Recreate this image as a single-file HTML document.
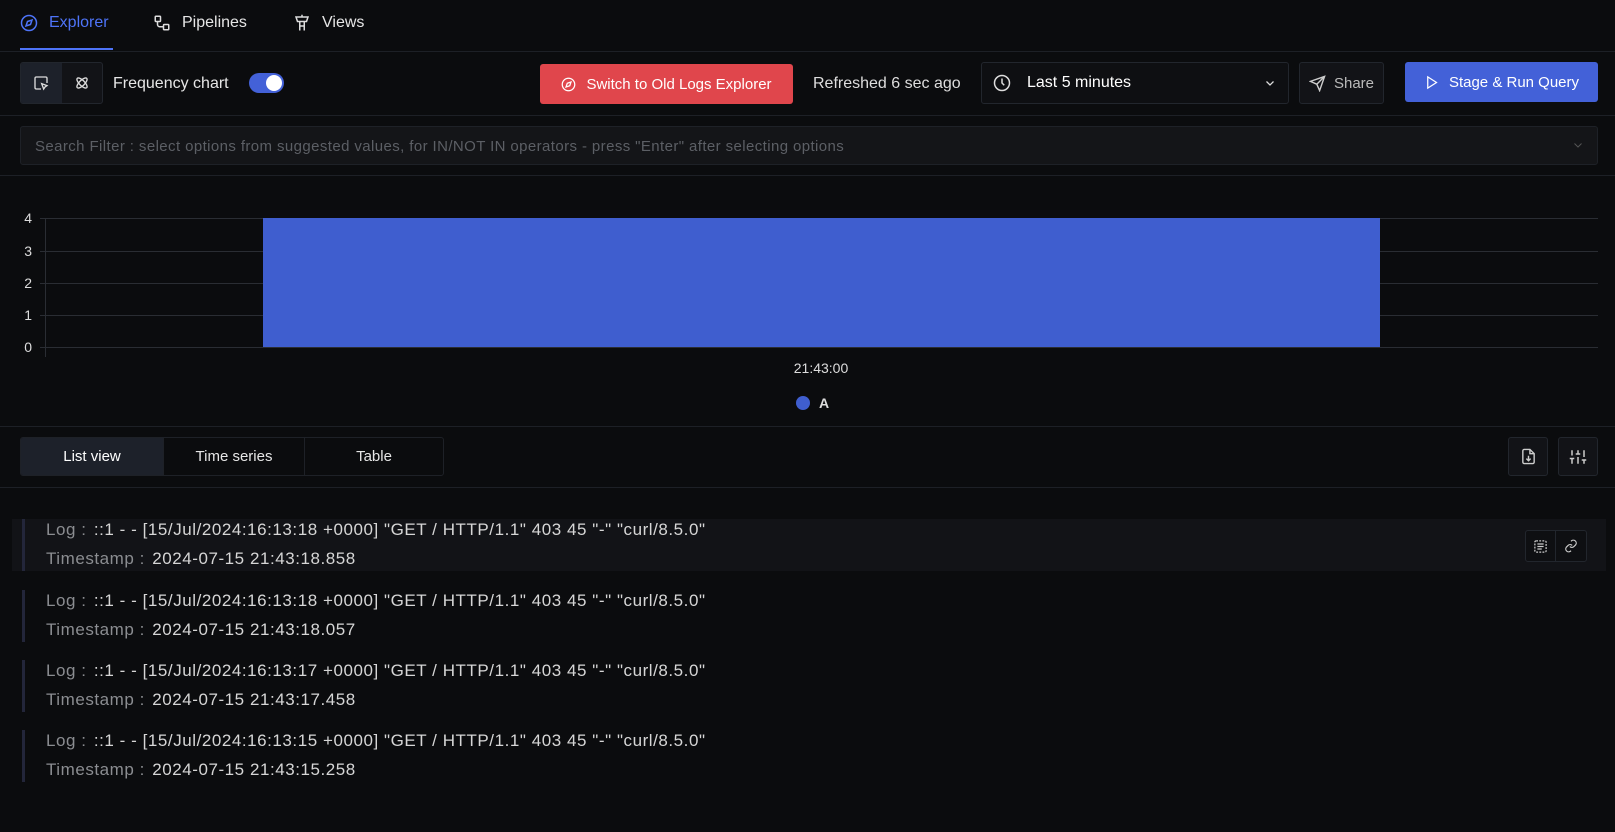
<!DOCTYPE html>
<html><head><meta charset="utf-8"><style>
*{box-sizing:border-box;margin:0;padding:0}
body{width:1615px;height:832px;background:#0b0c0e;color:#e6e6e6;font-family:"Liberation Sans",sans-serif;position:relative;overflow:hidden;font-size:15px}
.a{position:absolute}
.hl{position:absolute;left:0;width:1615px;height:1px;background:#1d2026}
.btn{position:absolute;border:1px solid #22262d;border-radius:3px;background:#121317;display:flex;align-items:center;justify-content:center}
svg{display:block}
.log{position:absolute;left:0;width:1606px;height:52px}
.log .bar{position:absolute;left:22px;top:0;width:3px;height:100%;background:#23263a}
.log .l1,.log .l2{position:absolute;left:46px;font-size:17px;color:#d6d6d6;white-space:nowrap;letter-spacing:0.55px}
.log .l1{top:1px}.log .l2{top:30px}
.log span.k{color:#8b8d91;margin-right:2px}
</style></head><body>
<div class="a" style="left:20px;top:14px;display:flex;align-items:center;color:#4e74f8;font-size:16px">
<svg width="18" height="18" viewBox="0 0 24 24" fill="none" stroke="#4e74f8" stroke-width="2"><circle cx="12" cy="12" r="10"/><path d="M16 8l-2 6-6 2 2-6z"/></svg><span style="margin-left:11px">Explorer</span></div>
<div class="a" style="left:20px;top:48px;width:93px;height:2px;background:#4e74f8"></div>
<div class="a" style="left:153px;top:14px;display:flex;align-items:center;font-size:16px">
<svg width="18" height="18" viewBox="0 0 24 24" fill="none" stroke="#ddd" stroke-width="2"><rect x="3" y="3" width="7" height="7" rx="1"/><rect x="14" y="14" width="7" height="7" rx="1"/><path d="M6 10v4a3 3 0 003 3h5"/></svg><span style="margin-left:11px">Pipelines</span></div>
<div class="a" style="left:293px;top:14px;display:flex;align-items:center;font-size:16px">
<svg width="18" height="18" viewBox="0 0 24 24" fill="none" stroke="#ddd" stroke-width="2"><path d="M4 4h16l-2 6H6z M12 1v3 M9 10v12 M15 10v12 M9 16h6"/></svg><span style="margin-left:11px">Views</span></div>
<div class="hl" style="top:51px"></div>
<div class="btn" style="left:20px;top:62px;width:83px;height:42px;padding:0;justify-content:flex-start;overflow:hidden">
<div style="width:42px;height:42px;background:#1d212a;display:flex;align-items:center;justify-content:center"><svg width="16" height="16" viewBox="0 0 24 24" fill="none" stroke="#ddd" stroke-width="2"><path d="M12 21H5a2 2 0 01-2-2V5a2 2 0 012-2h14a2 2 0 012 2v7"/><path d="M13 13l8 3-3 2-2 3z"/></svg></div>
<div style="width:41px;height:42px;display:flex;align-items:center;justify-content:center"><svg width="16" height="16" viewBox="0 0 24 24" fill="none" stroke="#ddd" stroke-width="2"><ellipse cx="12" cy="12" rx="10" ry="4" transform="rotate(45 12 12)"/><ellipse cx="12" cy="12" rx="10" ry="4" transform="rotate(-45 12 12)"/></svg></div></div>
<div class="a" style="left:113px;top:75px;font-size:16px">Frequency chart</div>
<div class="a" style="left:249px;top:73px;width:35px;height:20px;border-radius:10px;background:#4361d8"><div style="position:absolute;right:2px;top:2px;width:16px;height:16px;border-radius:50%;background:#fff"></div></div>
<div class="a" style="left:540px;top:64px;width:253px;height:40px;background:#e0464c;border-radius:3px;display:flex;align-items:center;justify-content:center;font-size:15px;color:#fff">
<svg width="15" height="15" viewBox="0 0 24 24" fill="none" stroke="#fff" stroke-width="2"><circle cx="12" cy="12" r="10"/><path d="M16 8l-2 6-6 2 2-6z"/></svg><span style="margin-left:10px">Switch to Old Logs Explorer</span></div>
<div class="a" style="left:813px;top:75px;font-size:16px;color:#ddd">Refreshed 6 sec ago</div>
<div class="btn" style="left:981px;top:62px;width:308px;height:42px;justify-content:flex-start;padding-left:11px;background:#0e0f12">
<svg width="18" height="18" viewBox="0 0 24 24" fill="none" stroke="#ddd" stroke-width="2"><circle cx="12" cy="12" r="10"/><path d="M12 6v6l3 3"/></svg><span style="margin-left:16px;font-size:16px;color:#fff">Last 5 minutes</span>
<svg style="position:absolute;right:12px" width="12" height="12" viewBox="0 0 24 24" fill="none" stroke="#ddd" stroke-width="2.5"><path d="M5 9l7 7 7-7"/></svg></div>
<div class="btn" style="left:1299px;top:62px;width:85px;height:42px;color:#bbb;font-size:15px">
<svg width="17" height="17" viewBox="0 0 24 24" fill="none" stroke="#ccc" stroke-width="2"><path d="M22 2L11 13 M22 2l-7 20-4-9-9-4z"/></svg><span style="margin-left:8px">Share</span></div>
<div class="a" style="left:1405px;top:62px;width:193px;height:40px;background:#4361d8;border-radius:3px;display:flex;align-items:center;justify-content:center;font-size:15px;color:#fff">
<svg width="15" height="15" viewBox="0 0 24 24" fill="none" stroke="#fff" stroke-width="2"><path d="M6 3l14 9-14 9z"/></svg><span style="margin-left:10px">Stage &amp; Run Query</span></div>
<div class="hl" style="top:115px"></div>
<div class="a" style="left:20px;top:126px;width:1578px;height:39px;background:#141518;border:1px solid #1e2127;border-radius:3px"></div>
<div class="a" style="left:35px;top:138px;font-size:15px;color:#5c5f65;letter-spacing:0.4px">Search Filter : select options from suggested values, for IN/NOT IN operators - press "Enter" after selecting options</div>
<svg class="a" style="left:1572px;top:139px" width="12" height="12" viewBox="0 0 24 24" fill="none" stroke="#555" stroke-width="2"><path d="M5 9l7 7 7-7"/></svg>
<div class="hl" style="top:175px"></div>
<svg class="a" style="left:0;top:200px" width="1615" height="220">
<g stroke="#2a2d33" stroke-width="1">
<line x1="40" y1="18.5" x2="1598" y2="18.5"/><line x1="40" y1="51.5" x2="1598" y2="51.5"/><line x1="40" y1="83.5" x2="1598" y2="83.5"/><line x1="40" y1="115.5" x2="1598" y2="115.5"/><line x1="40" y1="147.5" x2="1598" y2="147.5"/>
<line x1="45.5" y1="18" x2="45.5" y2="157"/></g>
<rect x="263" y="18" width="1117" height="129" fill="#3f5ecf"/>
<g fill="#ddd" font-family="Liberation Sans" font-size="14" text-anchor="end">
<text x="32" y="23">4</text><text x="32" y="56">3</text><text x="32" y="88">2</text><text x="32" y="120">1</text><text x="32" y="152">0</text></g>
<text x="821" y="173" fill="#ddd" font-family="Liberation Sans" font-size="14" text-anchor="middle">21:43:00</text>
<circle cx="803" cy="203" r="7" fill="#3f5ecf"/>
<text x="819" y="208" fill="#ddd" font-family="Liberation Sans" font-size="14" font-weight="bold">A</text>
</svg>
<div class="hl" style="top:426px"></div>
<div class="a" style="left:20px;top:437px;width:424px;height:39px;border:1px solid #1e2127;border-radius:3px;display:flex;font-size:15px;overflow:hidden">
<div style="width:142px;background:#1d212a;display:flex;align-items:center;justify-content:center;color:#fff">List view</div>
<div style="width:141px;border-left:1px solid #1e2127;display:flex;align-items:center;justify-content:center">Time series</div>
<div style="flex:1;border-left:1px solid #1e2127;display:flex;align-items:center;justify-content:center">Table</div></div>
<div class="btn" style="left:1508px;top:437px;width:40px;height:39px"><svg width="17" height="17" viewBox="0 0 24 24" fill="none" stroke="#ccc" stroke-width="2"><path d="M14 2H6a2 2 0 00-2 2v16a2 2 0 002 2h12a2 2 0 002-2V8z M14 2v6h6 M12 11v7 M9 15l3 3 3-3"/></svg></div>
<div class="btn" style="left:1558px;top:437px;width:40px;height:39px"><svg width="18" height="18" viewBox="0 0 24 24" fill="none" stroke="#ccc" stroke-width="2"><path d="M4 21v-7 M4 10V3 M12 21v-9 M12 8V3 M20 21v-5 M20 12V3 M1 14h6 M9 8h6 M17 16h6"/></svg></div>
<div class="hl" style="top:487px"></div>
<div class="log" style="top:519px;left:12px;width:1594px;background:#121317">
<div class="bar" style="left:10px"></div>
<div class="l1" style="left:34px"><span class="k">Log : </span> ::1 - - [15/Jul/2024:16:13:18 +0000] "GET / HTTP/1.1" 403 45 "-" "curl/8.5.0"</div>
<div class="l2" style="left:34px"><span class="k">Timestamp : </span>2024-07-15 21:43:18.858</div>
<div style="position:absolute;left:1513px;top:11px;width:62px;height:32px;border:1px solid #22262d;border-radius:3px;display:flex;background:#0e0f12">
<div style="width:30px;display:flex;align-items:center;justify-content:center;border-right:1px solid #22262d"><svg width="15" height="15" viewBox="0 0 24 24" fill="none" stroke="#ccc" stroke-width="2"><rect x="3" y="3" width="18" height="18" rx="2" stroke-dasharray="3 2"/><path d="M7 8h10 M7 12h10 M7 16h7"/></svg></div>
<div style="flex:1;display:flex;align-items:center;justify-content:center"><svg width="14" height="14" viewBox="0 0 24 24" fill="none" stroke="#ccc" stroke-width="2"><path d="M10 13a5 5 0 007 0l3-3a5 5 0 00-7-7l-1 1 M14 11a5 5 0 00-7 0l-3 3a5 5 0 007 7l1-1"/></svg></div></div>
</div>
<div class="log" style="top:590px"><div class="bar"></div>
<div class="l1"><span class="k">Log : </span> ::1 - - [15/Jul/2024:16:13:18 +0000] "GET / HTTP/1.1" 403 45 "-" "curl/8.5.0"</div>
<div class="l2"><span class="k">Timestamp : </span>2024-07-15 21:43:18.057</div></div>
<div class="log" style="top:660px"><div class="bar"></div>
<div class="l1"><span class="k">Log : </span> ::1 - - [15/Jul/2024:16:13:17 +0000] "GET / HTTP/1.1" 403 45 "-" "curl/8.5.0"</div>
<div class="l2"><span class="k">Timestamp : </span>2024-07-15 21:43:17.458</div></div>
<div class="log" style="top:730px"><div class="bar"></div>
<div class="l1"><span class="k">Log : </span> ::1 - - [15/Jul/2024:16:13:15 +0000] "GET / HTTP/1.1" 403 45 "-" "curl/8.5.0"</div>
<div class="l2"><span class="k">Timestamp : </span>2024-07-15 21:43:15.258</div></div>
</body></html>
